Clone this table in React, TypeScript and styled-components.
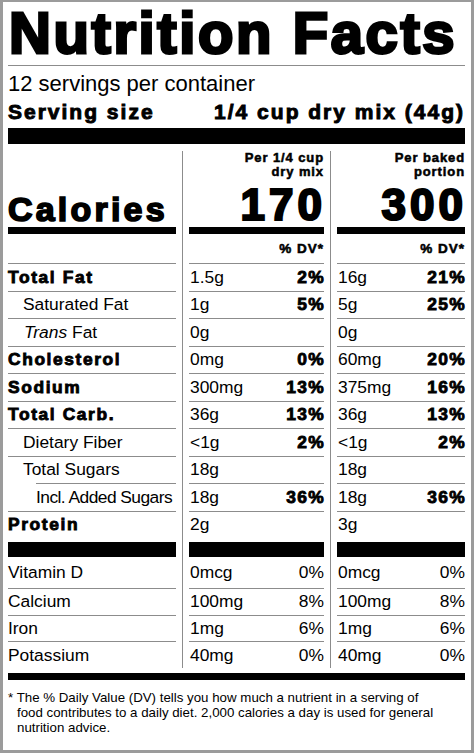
import styled, { createGlobalStyle, css } from "styled-components";
import type { ReactNode } from "react";

const GlobalStyle = createGlobalStyle`
  html, body {
    margin: 0;
    padding: 0;
    background: #fff;
  }
  body {
    font-family: "Liberation Sans", Arial, Helvetica, sans-serif;
    color: #000;
  }
`;

const LINE = "#8c8c8c";

// Helvetica Black stand-in: bold + a thin stroke to fatten strokes
const heavy = (stroke = 0.045) => css`
  font-weight: 700;
  -webkit-text-stroke: ${stroke}em #000;
`;

type Nutrient = {
  name: ReactNode;
  bold?: boolean;
  indent?: number;
  lineIndent?: number;
  tight?: boolean;
  a: string;
  ap?: string;
  b: string;
  bp?: string;
};

const nutrients: Nutrient[] = [
  { name: "Total Fat", bold: true, a: "1.5g", ap: "2%", b: "16g", bp: "21%" },
  { name: "Saturated Fat", indent: 15, a: "1g", ap: "5%", b: "5g", bp: "25%" },
  {
    name: (
      <>
        <i>Trans</i> Fat
      </>
    ),
    indent: 16,
    a: "0g",
    b: "0g",
  },
  { name: "Cholesterol", bold: true, a: "0mg", ap: "0%", b: "60mg", bp: "20%" },
  { name: "Sodium", bold: true, a: "300mg", ap: "13%", b: "375mg", bp: "16%" },
  { name: "Total Carb.", bold: true, a: "36g", ap: "13%", b: "36g", bp: "13%" },
  { name: "Dietary Fiber", indent: 15, a: "<1g", ap: "2%", b: "<1g", bp: "2%" },
  { name: "Total Sugars", indent: 15, a: "18g", b: "18g" },
  {
    name: "Incl. Added Sugars",
    lineIndent: 28,
    tight: true,
    a: "18g",
    ap: "36%",
    b: "18g",
    bp: "36%",
  },
];

const vitamins = [
  { name: "Vitamin D", a: "0mcg", ap: "0%", b: "0mcg", bp: "0%" },
  { name: "Calcium", a: "100mg", ap: "8%", b: "100mg", bp: "8%" },
  { name: "Iron", a: "1mg", ap: "6%", b: "1mg", bp: "6%" },
  { name: "Potassium", a: "40mg", ap: "0%", b: "40mg", bp: "0%" },
];

const App = () => {
  return (
    <>
      <GlobalStyle />
      <Label>
        <Title>Nutrition Facts</Title>
        <Servings>
          <div>12 servings per container</div>
          <ServingSize>
            <span>Serving size</span>
            <span>1/4 cup dry mix (44g)</span>
          </ServingSize>
        </Servings>
        <Bar $h={16} />

        <Table>
          <Row $h={28}>
            <Cell $col={0} />
            <Cell $col={1}>
              <Head>
                Per 1/4 cup
                <br />
                dry mix
              </Head>
            </Cell>
            <Cell $col={2}>
              <Head>
                Per baked
                <br />
                portion
              </Head>
            </Cell>
          </Row>

          <Row $h={55}>
            <Cell $col={0}>
              <CalBody>
                <Calories>Calories</Calories>
              </CalBody>
            </Cell>
            <Cell $col={1}>
              <CalBody $right>
                <BigNumber>170</BigNumber>
              </CalBody>
            </Cell>
            <Cell $col={2}>
              <CalBody $right>
                <BigNumber>300</BigNumber>
              </CalBody>
            </Cell>
          </Row>

          <Row $h={29}>
            <Cell $col={0} />
            <Cell $col={1}>
              <DvHead>% DV*</DvHead>
            </Cell>
            <Cell $col={2}>
              <DvHead>% DV*</DvHead>
            </Cell>
          </Row>

          {nutrients.map((n, i) => (
            <Row key={i} $h={27.5}>
              <Cell $col={0}>
                <Body $line $indent={n.lineIndent}>
                  <Name $bold={n.bold} $pad={n.indent} $tight={n.tight}>
                    {n.name}
                  </Name>
                </Body>
              </Cell>
              <Cell $col={1}>
                <Body $line>
                  <Amount>{n.a}</Amount>
                  {n.ap && <Pct $bold>{n.ap}</Pct>}
                </Body>
              </Cell>
              <Cell $col={2}>
                <Body $line>
                  <Amount>{n.b}</Amount>
                  {n.bp && <Pct $bold>{n.bp}</Pct>}
                </Body>
              </Cell>
            </Row>
          ))}

          <Row $h={27.5}>
            <Cell $col={0}>
              <Body $line>
                <Name $bold>Protein</Name>
              </Body>
            </Cell>
            <Cell $col={1}>
              <Body $line>
                <Amount>2g</Amount>
              </Body>
            </Cell>
            <Cell $col={2}>
              <Body $line>
                <Amount>3g</Amount>
              </Body>
            </Cell>
          </Row>

          <Row $h={18.5}>
            {[0, 1, 2].map((c) => (
              <Cell key={c} $col={c}>
                <CellBar />
              </Cell>
            ))}
          </Row>

          {vitamins.map((v, i) => (
            <Row key={v.name} $h={i === 0 ? 31.5 : 26.67}>
              <Cell $col={0}>
                <Body $line={i > 0}>
                  <Name>{v.name}</Name>
                </Body>
              </Cell>
              <Cell $col={1}>
                <Body $line={i > 0}>
                  <Amount>{v.a}</Amount>
                  <Pct>{v.ap}</Pct>
                </Body>
              </Cell>
              <Cell $col={2}>
                <Body $line={i > 0}>
                  <Amount>{v.b}</Amount>
                  <Pct>{v.bp}</Pct>
                </Body>
              </Cell>
            </Row>
          ))}
        </Table>

        <Bar $h={7} $top={5} />

        <Footnote>
          * The % Daily Value (DV) tells you how much a nutrient in a serving of
          <br />
          food contributes to a daily diet. 2,000 calories a day is used for general
          <br />
          nutrition advice.
        </Footnote>
      </Label>
    </>
  );
};

const Label = styled.div`
  box-sizing: border-box;
  width: 474px;
  height: 753px;
  border: 3px solid #9b9b9b;
  border-top-width: 2px;
  padding: 0 6px 0 5px;
  background: #fff;
`;

const Title = styled.h1`
  margin: -2px 0 0;
  padding: 0 0 0 1px;
  border-bottom: 1px solid ${LINE};
  font-size: 58px;
  line-height: 65px;
  letter-spacing: 2.6px;
  white-space: nowrap;
  ${heavy(0.05)}
`;

const Servings = styled.div`
  padding: 3.5px 0 2.5px;
  font-size: 22px;
  line-height: 28px;
  white-space: nowrap;
`;

const ServingSize = styled.div`
  display: flex;
  justify-content: space-between;
  font-size: 21px;
  letter-spacing: 2px;
  ${heavy()}
`;

const Bar = styled.div<{ $h: number; $top?: number }>`
  height: ${(p) => p.$h}px;
  margin-top: ${(p) => p.$top ?? 0}px;
  background: #000;
`;

const Table = styled.div`
  margin-top: 7px;
`;

const Row = styled.div<{ $h: number }>`
  display: grid;
  grid-template-columns: 174px 148px 135px;
  height: ${(p) => p.$h}px;
`;

const Cell = styled.div<{ $col: number }>`
  box-sizing: border-box;
  display: flex;
  flex-direction: column;
  min-width: 0;
  padding: ${(p) =>
    p.$col === 0 ? "0 6px 0 0" : p.$col === 1 ? "0 6px" : "0 0 0 6px"};
  border-left: ${(p) => (p.$col ? `1px solid ${LINE}` : "none")};
`;

const Head = styled.div`
  margin-top: -0.5px;
  text-align: right;
  font-size: 13px;
  line-height: 14.5px;
  letter-spacing: 0.9px;
  white-space: nowrap;
  ${heavy(0.04)}
`;

const CalBody = styled.div<{ $right?: boolean }>`
  flex: 1;
  display: flex;
  align-items: flex-end;
  justify-content: ${(p) => (p.$right ? "flex-end" : "flex-start")};
  border-bottom: 7px solid #000;
`;

const Calories = styled.span`
  font-size: 34px;
  line-height: 1;
  padding-bottom: 1.5px;
  letter-spacing: 3.2px;
  ${heavy(0.05)}
`;

const BigNumber = styled.span`
  font-size: 44px;
  line-height: 1;
  letter-spacing: 4px;
  margin-right: -2px;
  ${heavy(0.05)}
`;

const DvHead = styled.div`
  flex: 1;
  display: flex;
  align-items: center;
  justify-content: flex-end;
  font-size: 13.5px;
  letter-spacing: 1px;
  ${heavy(0.04)}
`;

const Body = styled.div<{ $line?: boolean; $indent?: number }>`
  flex: 1;
  display: flex;
  align-items: center;
  justify-content: space-between;
  margin-left: ${(p) => p.$indent ?? 0}px;
  border-top: ${(p) => (p.$line ? `1px solid ${LINE}` : "none")};
  font-size: 17.4px;
  white-space: nowrap;
`;

const Name = styled.span<{ $bold?: boolean; $pad?: number; $tight?: boolean }>`
  padding-left: ${(p) => p.$pad ?? 0}px;
  letter-spacing: ${(p) => (p.$tight ? "-0.55px" : "0")};
  ${(p) =>
    p.$bold &&
    css`
      letter-spacing: 1.6px;
      ${heavy(0.05)}
    `}
`;

const Amount = styled.span`
  padding-left: 1px;
`;

const Pct = styled.span<{ $bold?: boolean }>`
  ${(p) =>
    p.$bold &&
    css`
      letter-spacing: 1.3px;
      margin-right: -1px;
      ${heavy(0.05)}
    `}
`;

const CellBar = styled.div`
  margin-top: 3.5px;
  height: 15px;
  background: #000;
`;

const Footnote = styled.p`
  margin: 10.5px 0 0;
  padding-left: 9px;
  text-indent: -9px;
  font-size: 13.3px;
  line-height: 15px;
  white-space: nowrap;
`;

export default App;
